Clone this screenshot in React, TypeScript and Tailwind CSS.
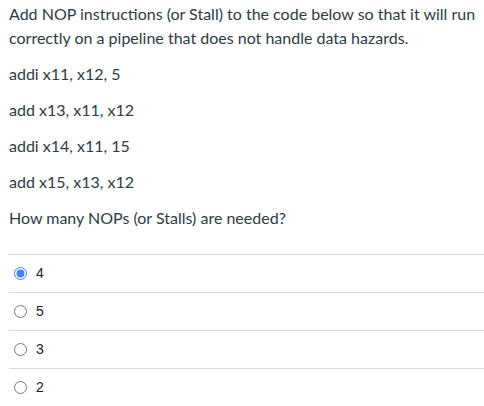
const CODE = ['addi x11, x12, 5', 'add x13, x11, x12', 'addi x14, x11, 15', 'add x15, x13, x12']

const ANSWERS = [
  { value: '4', checked: true },
  { value: '5', checked: false },
  { value: '3', checked: false },
  { value: '2', checked: false },
]

export default function App() {
  return (
    <div className="bg-white w-[484px] h-[406px] overflow-hidden pl-[9px] pt-[2px] text-[#2d3b45] font-['Lato','Liberation_Sans',sans-serif]">
      <div className="text-[16px] leading-[24px]">
        <p className="mb-[12px]">
          Add NOP instructions (or Stall) to the code below so that it will run correctly on a pipeline that does not handle data hazards.
        </p>
        {CODE.map(line => (
          <p key={line} className="mb-[12px]">{line}</p>
        ))}
        <p>How many NOPs (or Stalls) are needed?</p>
      </div>

      <div className="mt-[24px]">
        {ANSWERS.map(a => (
          <label
            key={a.value}
            className="flex items-center h-[38px] border-t border-[#d9d9d9] font-['Liberation_Sans',Arial,sans-serif] text-[14px] text-[#222]"
          >
            <input
              type="radio"
              name="nops"
              defaultChecked={a.checked}
              className="w-[13px] h-[13px] ml-[5px] mr-[9px] accent-[#3b82f6]"
            />
            {a.value}
          </label>
        ))}
      </div>
    </div>
  )
}
